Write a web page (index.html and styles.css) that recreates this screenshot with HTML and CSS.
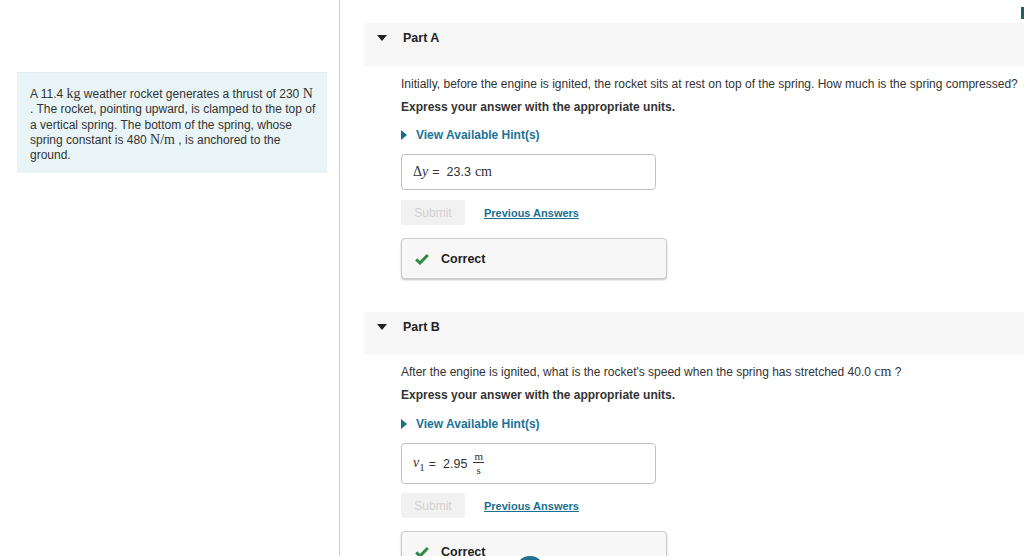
FILE: index.html
```html
<!DOCTYPE html>
<html lang="en">
<head>
  <meta charset="UTF-8">
  <meta name="viewport" content="width=device-width, initial-scale=1.0">
  <title>Weather Rocket</title>
  <link rel="stylesheet" href="styles.css">
</head>
<body>
<div class="page">
  <div class="left">
    <div class="problem">
      A 11.4 <span class="m">kg</span> weather rocket generates a thrust of 230 <span class="m">N</span>
      . The rocket, pointing upward, is clamped to the top of a vertical spring. The bottom of the spring, whose
      spring constant is 480 <span class="m">N/m</span> , is anchored to the ground.
    </div>
  </div>

  <div class="main">
    <div class="part">
      <div class="part-head"><span class="caret"></span>Part A</div>
      <div class="part-body">
        <p class="question">Initially, before the engine is ignited, the rocket sits at rest on top of the spring. How much is the spring compressed?</p>
        <p class="instr">Express your answer with the appropriate units.</p>
        <div class="hint"><span class="hint-caret"></span>View Available Hint(s)</div>
        <div class="answer">
          <span class="m">Δ<i>y</i></span><span class="eq">=</span><span class="val">23.3</span><span class="m unit">cm</span>
        </div>
        <div class="actions">
          <button class="submit">Submit</button>
          <a class="prev" href="#">Previous Answers</a>
        </div>
        <div class="correct">
          <svg class="check" width="14" height="12" viewBox="0 0 14 12"><path d="M1.2 6.4 L5 10 L12.8 2" fill="none" stroke="#2f8a45" stroke-width="3"/></svg>
          Correct
        </div>
      </div>
    </div>

    <div class="part part-b">
      <div class="part-head"><span class="caret"></span>Part B</div>
      <div class="part-body">
        <p class="question">After the engine is ignited, what is the rocket's speed when the spring has stretched 40.0 <span class="m">cm</span> ?</p>
        <p class="instr">Express your answer with the appropriate units.</p>
        <div class="hint"><span class="hint-caret"></span>View Available Hint(s)</div>
        <div class="answer tall">
          <span class="m"><i>v</i><sub>1</sub></span><span class="eq">=</span><span class="val">2.95</span>
          <span class="frac m"><span class="num">m</span><span class="den">s</span></span>
        </div>
        <div class="actions">
          <button class="submit">Submit</button>
          <a class="prev" href="#">Previous Answers</a>
        </div>
        <div class="correct">
          <svg class="check" width="14" height="12" viewBox="0 0 14 12"><path d="M1.2 6.4 L5 10 L12.8 2" fill="none" stroke="#2f8a45" stroke-width="3"/></svg>
          Correct
        </div>
      </div>
    </div>
  </div>
</div>
<div class="corner-mark"></div>
<div class="help-dot"></div>
</body>
</html>
```

FILE: styles.css
```css
body {
  margin: 0;
  font-family: 'Liberation Sans', Arial, sans-serif;
  font-size: 12px;
  color: #333;
  background: #fff;
}
.page {
  display: flex;
  height: 556px;
  overflow: hidden;
}
.left {
  width: 310px;
  padding: 72px 12px 0 17px;
  border-right: 1px solid #cfcfcf;
  flex-shrink: 0;
}
.problem {
  background: #e9f4f6;
  border-top: 1px solid #e2eef0;
  padding: 14px 10px 10px 13px;
  line-height: 15.3px;
  color: #333;
}
.m {
  font-family: 'Liberation Serif', 'DejaVu Serif', serif;
  font-size: 14px;
}
.problem .m {
  line-height: 1;
}
.main {
  flex: 1;
  padding: 23px 0 0 24px;
}
.part-head {
  background: #f7f7f7;
  height: 35px;
  padding: 8px 0 0 13px;
  font-weight: bold;
  font-size: 12.5px;
  color: #222;
  display: flex;
  align-items: flex-start;
  line-height: 14px;
}
.caret {
  width: 0;
  height: 0;
  border-left: 5px solid transparent;
  border-right: 5px solid transparent;
  border-top: 6px solid #222;
  margin: 4px 16px 0 0;
}
.part-body {
  padding-left: 37px;
}
p {
  margin: 0;
}
.question {
  margin-top: 11px;
  line-height: 14px;
  color: #333;
}
.part-b .question {
  margin-top: 10px;
}
.question .m {
  line-height: 1;
}
.instr {
  margin-top: 9px;
  line-height: 14px;
  font-weight: bold;
  color: #333;
}
.hint {
  margin-top: 14px;
  line-height: 14px;
  font-weight: bold;
  color: #1a7396;
  display: flex;
  align-items: center;
}
.part-b .hint {
  margin-top: 15px;
}
.hint-caret {
  width: 0;
  height: 0;
  border-top: 5px solid transparent;
  border-bottom: 5px solid transparent;
  border-left: 6px solid #1a6d88;
  margin: 0 9px 0 0;
}
.answer {
  margin-top: 12px;
  width: 242px;
  height: 34px;
  border: 1px solid #c2c2c2;
  border-radius: 4px;
  padding-left: 11px;
  display: flex;
  align-items: center;
  font-size: 12.5px;
  color: #333;
}
.answer.tall {
  height: 39px;
}
.answer .m {
  font-size: 14px;
}
.answer sub {
  font-size: 11px;
}
.eq {
  margin: 0 7px 0 4px;
}
.unit {
  margin-left: 4px;
}
.frac {
  display: inline-flex;
  flex-direction: column;
  align-items: center;
  font-size: 11px !important;
  line-height: 10px;
  margin-left: 6px;
  margin-top: -2px;
}
.frac .num {
  border-bottom: 1px solid #333;
  padding: 0 1px 1px;
}
.frac .den {
  padding-top: 2px;
}
.actions {
  margin-top: 10px;
  display: flex;
  align-items: center;
}
.part-b .actions {
  margin-top: 9px;
}
.submit {
  width: 64px;
  height: 25px;
  border: none;
  border-radius: 2px;
  background: #f1f1f1;
  color: #d2d2d2;
  font-family: 'Liberation Sans', Arial, sans-serif;
  font-size: 12px;
  padding: 0;
}
.prev {
  margin-left: 19px;
  color: #1a6f8f;
  font-weight: bold;
  font-size: 11px;
  text-decoration: underline;
}
.correct {
  margin-top: 13px;
  width: 251px;
  height: 39px;
  border: 1px solid #cdcdcd;
  border-radius: 4px;
  background: #f7f7f7;
  box-shadow: 0 1px 2px rgba(0, 0, 0, 0.25);
  display: flex;
  align-items: center;
  padding-left: 13px;
  font-weight: bold;
  font-size: 12.5px;
  color: #222;
}
.check {
  margin-right: 12px;
}
.part-b {
  margin-top: 33px;
}
.corner-mark {
  position: absolute;
  top: 7px;
  left: 1021px;
  width: 3px;
  height: 12px;
  background: #1d5f73;
}
.help-dot {
  position: absolute;
  top: 556px;
  left: 515px;
  width: 30px;
  height: 30px;
  border-radius: 50%;
  background: #1d7294;
}
```
